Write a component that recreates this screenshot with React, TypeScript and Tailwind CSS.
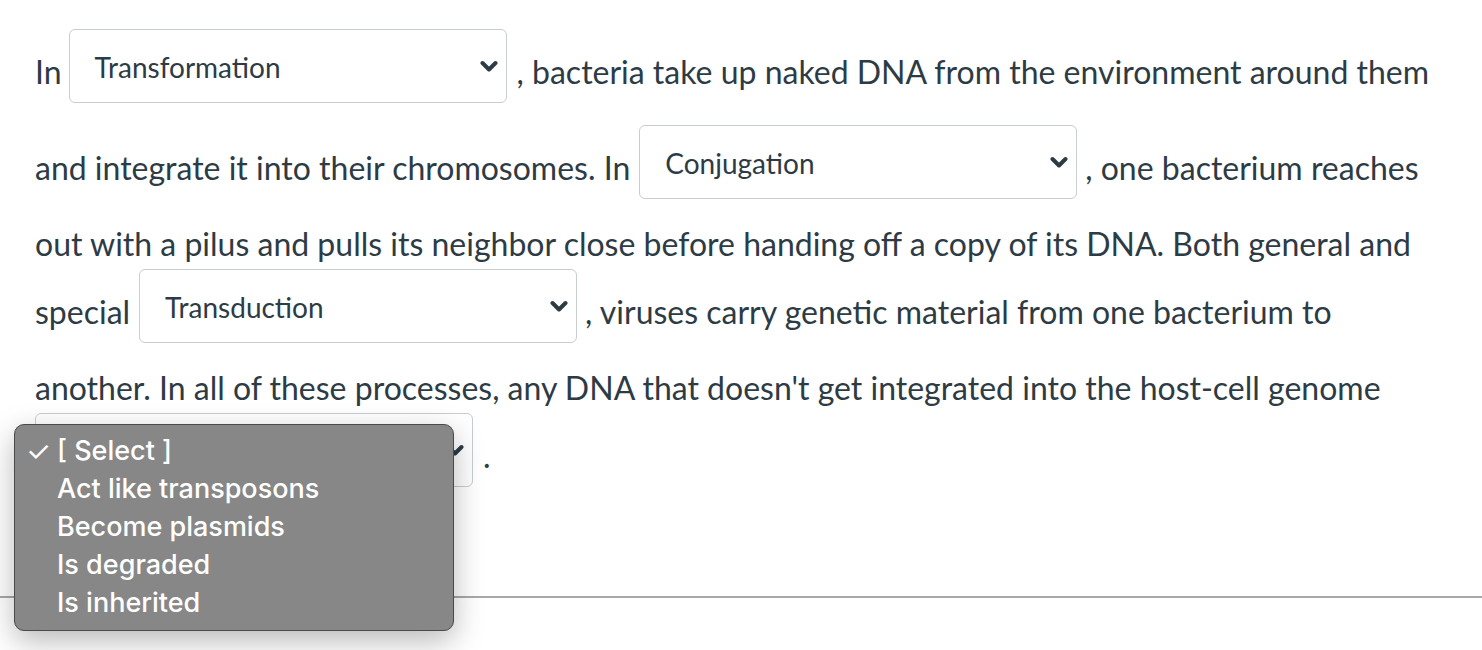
import React from 'react'

const body = 'text-[32px] leading-[38px] text-[#2d3b45] whitespace-pre'

function Chevron() {
  return (
    <svg width="18" height="13" viewBox="0 0 18 13" className="shrink-0">
      <polyline
        points="2.5,3 9,9.5 15.5,3"
        fill="none"
        stroke="#2d3b45"
        strokeWidth="4"
        strokeLinecap="round"
        strokeLinejoin="round"
      />
    </svg>
  )
}

function FakeSelect({ value, className = '' }: { value: string; className?: string }) {
  return (
    <div
      className={`flex h-[74px] w-[438px] shrink-0 items-center justify-between rounded-[6px] border border-[#c7cdd1] bg-white pl-[25px] pr-[8px] ${className}`}
    >
      <span className="mt-[2px] text-[28px] leading-[34px] text-[#2d3b45]">{value}</span>
      <Chevron />
    </div>
  )
}

function Word({ children, className = '' }: { children: React.ReactNode; className?: string }) {
  return <span className={`${body} ${className}`}>{children}</span>
}

const options = ['[ Select ]', 'Act like transposons', 'Become plasmids', 'Is degraded', 'Is inherited']

export default function App() {
  return (
    <div className="relative h-[650px] w-full overflow-hidden bg-white" style={{ fontFamily: 'Lato, "Noto Sans", sans-serif' }}>
      <div className="flex flex-col pl-[35px] pt-[29px]">
        {/* ligne 1 */}
        <div className="flex h-[74px] items-start">
          <Word className="mt-[24px]">In</Word>
          <FakeSelect value="Transformation" className="ml-[7px]" />
          <Word className="mt-[24px] ml-[10px]">, bacteria take up naked DNA from the environment around them</Word>
        </div>

        {/* ligne 2 */}
        <div className="mt-[22px] flex h-[74px] items-start">
          <Word className="mt-[24px]">and integrate it into their chromosomes. In</Word>
          <FakeSelect value="Conjugation" className="ml-[9px]" />
          <Word className="mt-[24px] ml-[8px]">, one bacterium reaches</Word>
        </div>

        {/* ligne 3 */}
        <div className="flex">
          <Word className="mt-[26px]">out with a pilus and pulls its neighbor close before handing off a copy of its DNA. Both general and</Word>
        </div>

        {/* ligne 4 */}
        <div className="mt-[6px] flex h-[74px] items-start">
          <Word className="mt-[24px]">special</Word>
          <FakeSelect value="Transduction" className="ml-[9px]" />
          <Word className="mt-[24px] ml-[8px]">, viruses carry genetic material from one bacterium to</Word>
        </div>

        {/* ligne 5 */}
        <div className="flex">
          <Word className="mt-[26px]">another. In all of these processes, any DNA that doesn't get integrated into the host-cell genome</Word>
        </div>

        {/* ligne 6 */}
        <div className="mt-[6px] flex h-[74px] items-start">
          <FakeSelect value="" />
          <Word className="mt-[24px] ml-[10px]">.</Word>
        </div>
      </div>

      <div className="mt-[109px] h-[2px] w-full bg-[#a8a8a8]" />

      {/* menu natif ouvert */}
      <div
        className="absolute left-[14px] top-[424px] w-[440px] rounded-[10px] border border-[#4a4a4a] bg-[#878787] pb-[8px] pt-[7px] shadow-[0_10px_30px_rgba(0,0,0,0.28)]"
        style={{ fontFamily: 'Inter, "Liberation Sans", sans-serif' }}
      >
        {options.map((opt, i) => (
          <div key={opt} className="flex h-[38px] items-center text-[27px] font-medium text-white">
            <span className="w-[42px] pl-[11px] text-[28px] font-normal">{i === 0 ? '✓' : ''}</span>
            <span>{opt}</span>
          </div>
        ))}
      </div>
    </div>
  )
}
